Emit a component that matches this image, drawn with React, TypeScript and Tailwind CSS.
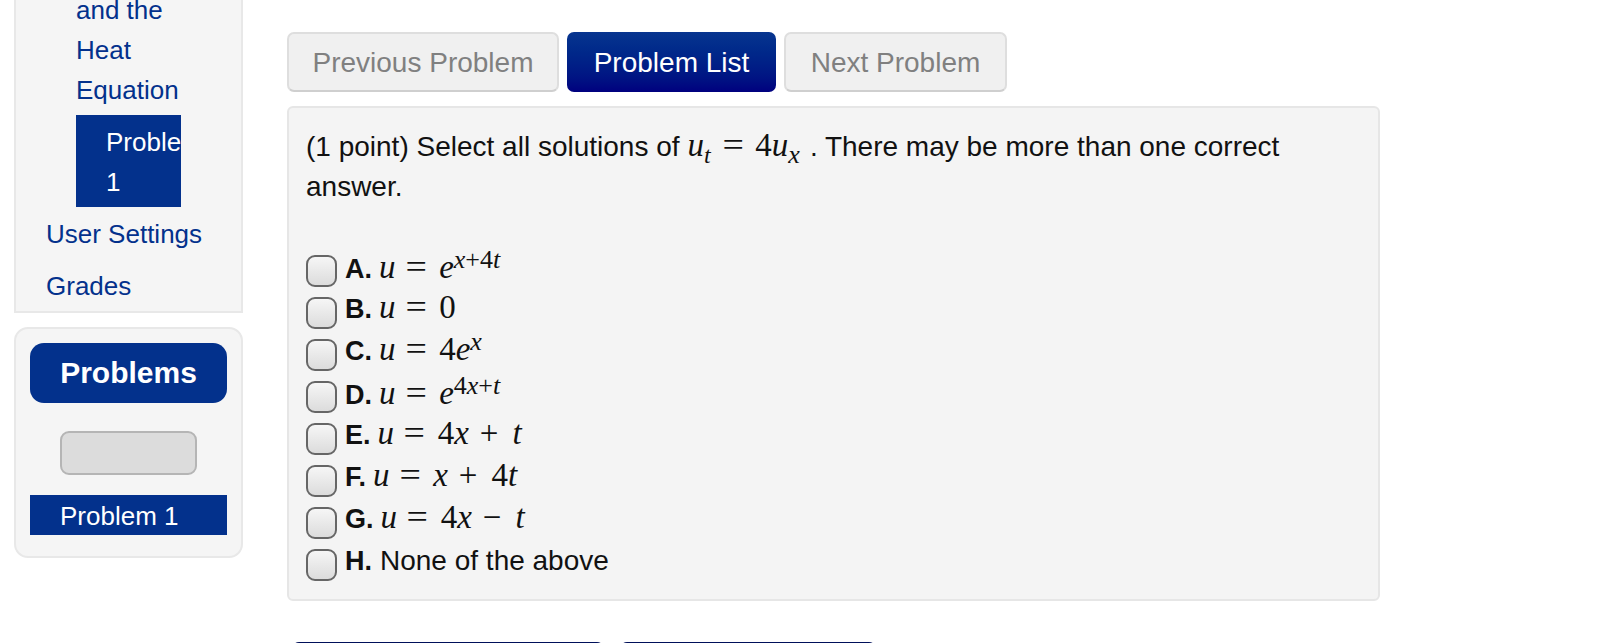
const navBlue = 'text-[#03318c]';

function Eq({ children }: { children: React.ReactNode }) {
  return <span className="ml-[7px] inline-flex items-baseline font-['Liberation_Serif',serif] text-[33px] leading-none text-[#111]">{children}</span>;
}

const I = ({ children }: { children: React.ReactNode }) => <i>{children}</i>;
const Rel = () => <span className="ml-[11px] mr-[14px] inline-block scale-x-[1.15]">=</span>;
const Bin = ({ children }: { children: React.ReactNode }) => <span className="ml-[11px] mr-[14px]">{children}</span>;
const Sup = ({ children }: { children: React.ReactNode }) => <span className="relative top-[-10px] text-[26px]">{children}</span>;

// rows with a superscript sit a little lower in the line
function Choice({ label, tall, children }: { label: string; tall?: boolean; children: React.ReactNode }) {
  return (
    <div className="flex h-[42px] items-center">
      <span className="h-[32px] w-[31px] shrink-0 rounded-[9px] border-2 border-[#666] bg-gradient-to-b from-[#f6f6f6] to-[#dcdcdc]" />
      <span className={tall ? 'mb-[5px] ml-[8px] flex items-baseline' : 'mb-[9px] ml-[8px] flex items-baseline'}>
        <b className="text-[27px] font-bold">{label}</b>
        {children}
      </span>
    </div>
  );
}

export default function App() {
  return (
    <div className="flex h-[643px] w-[1620px] overflow-hidden bg-white font-['Liberation_Sans',sans-serif] text-[28px] leading-[40px] text-[#111]">
      <aside className="ml-[14px] mt-[-10px] w-[229px] shrink-0">
        <div className={`h-[323px] border-2 border-t-0 border-[#e8e8e8] bg-[#f5f5f5] text-[26px] ${navBlue}`}>
          <div className="ml-[60px]">
            <div>and the</div>
            <div>Heat</div>
            <div>Equation</div>
            <div className="mt-[5px] w-[105px] overflow-hidden bg-[#03318c] pb-[5px] pl-[30px] pt-[7px] text-white">Problem 1</div>
          </div>
          <div className="pl-[30px] pt-[1px]">
            <div className="py-[6px]">User Settings</div>
            <div className="py-[6px]">Grades</div>
          </div>
        </div>
        <div className="mt-[14px] h-[231px] rounded-[14px] border-2 border-[#e8e8e8] bg-[#f5f5f5] px-[14px] pt-[14px]">
          <div className="flex h-[60px] items-center justify-center rounded-[14px] bg-[#03318c] text-[30px] font-bold text-white">Problems</div>
          <div className="mx-auto mt-[28px] h-[44px] w-[137px] rounded-[9px] border-2 border-[#b5b5b5] bg-[#dcdcdc]" />
          <div className="mt-[20px] h-[40px] bg-[#03318c] pl-[30px] text-[26px] leading-[42px] text-white">Problem 1</div>
        </div>
      </aside>

      <main className="ml-[44px] w-[1093px] shrink-0 pt-[32px]">
        <div className="flex gap-[8px] text-[28px]">
          <div className="flex h-[60px] w-[272px] items-center justify-center rounded-[7px] border-2 border-[#dedede] border-b-[#cfcfcf] bg-[#f0f0f0] pt-[2px] text-[#808080]">Previous Problem</div>
          <div className="flex h-[60px] w-[209px] items-center justify-center rounded-[7px] bg-gradient-to-b from-[#08358f] to-[#00007f] pt-[2px] text-white">Problem List</div>
          <div className="flex h-[60px] w-[223px] items-center justify-center rounded-[7px] border-2 border-[#dedede] border-b-[#cfcfcf] bg-[#f0f0f0] pt-[2px] text-[#808080]">Next Problem</div>
        </div>

        <div className="mt-[14px] h-[495px] rounded-[6px] border-2 border-[#e6e6e6] bg-[#f4f4f4] pl-[17px] pr-[40px] pt-[19px]">
          <div className="flex h-[40px] items-baseline whitespace-nowrap">
            (1 point) Select all solutions of
            <span className="ml-[8px] inline-flex items-baseline font-['Liberation_Serif',serif] text-[33px] leading-none">
              <i>u</i><i className="relative top-[7px] text-[24px]">t</i>
              <span className="mx-[13px] inline-block scale-x-[1.15]">=</span>4<i>u</i><i className="relative top-[7px] text-[26px]">x</i>
            </span>
            <span className="ml-[10px]">. There may be more than one correct</span>
          </div>
          <div>answer.</div>
          <div className="mt-[43px] flex flex-col">
            <Choice label="A." tall><Eq><I>u</I><Rel /><I>e</I><Sup><I>x</I>+4<I>t</I></Sup></Eq></Choice>
            <Choice label="B."><Eq><I>u</I><Rel />0</Eq></Choice>
            <Choice label="C."><Eq><I>u</I><Rel />4<I>e</I><Sup><I>x</I></Sup></Eq></Choice>
            <Choice label="D." tall><Eq><I>u</I><Rel /><I>e</I><Sup>4<I>x</I>+<I>t</I></Sup></Eq></Choice>
            <Choice label="E."><Eq><I>u</I><Rel />4<I>x</I><Bin>+</Bin><I>t</I></Eq></Choice>
            <Choice label="F."><Eq><I>u</I><Rel /><I>x</I><Bin>+</Bin>4<I>t</I></Eq></Choice>
            <Choice label="G."><Eq><I>u</I><Rel />4<I>x</I><Bin>−</Bin><I>t</I></Eq></Choice>
            <Choice label="H."><span className="ml-[8px]">None of the above</span></Choice>
          </div>
        </div>

        <div className="ml-[5px] mt-[41px] flex gap-[16px]">
          <div className="h-[10px] w-[312px] rounded-t-[7px] bg-[#00105a]" />
          <div className="h-[10px] w-[256px] rounded-t-[7px] bg-[#00105a]" />
        </div>
      </main>
    </div>
  );
}
